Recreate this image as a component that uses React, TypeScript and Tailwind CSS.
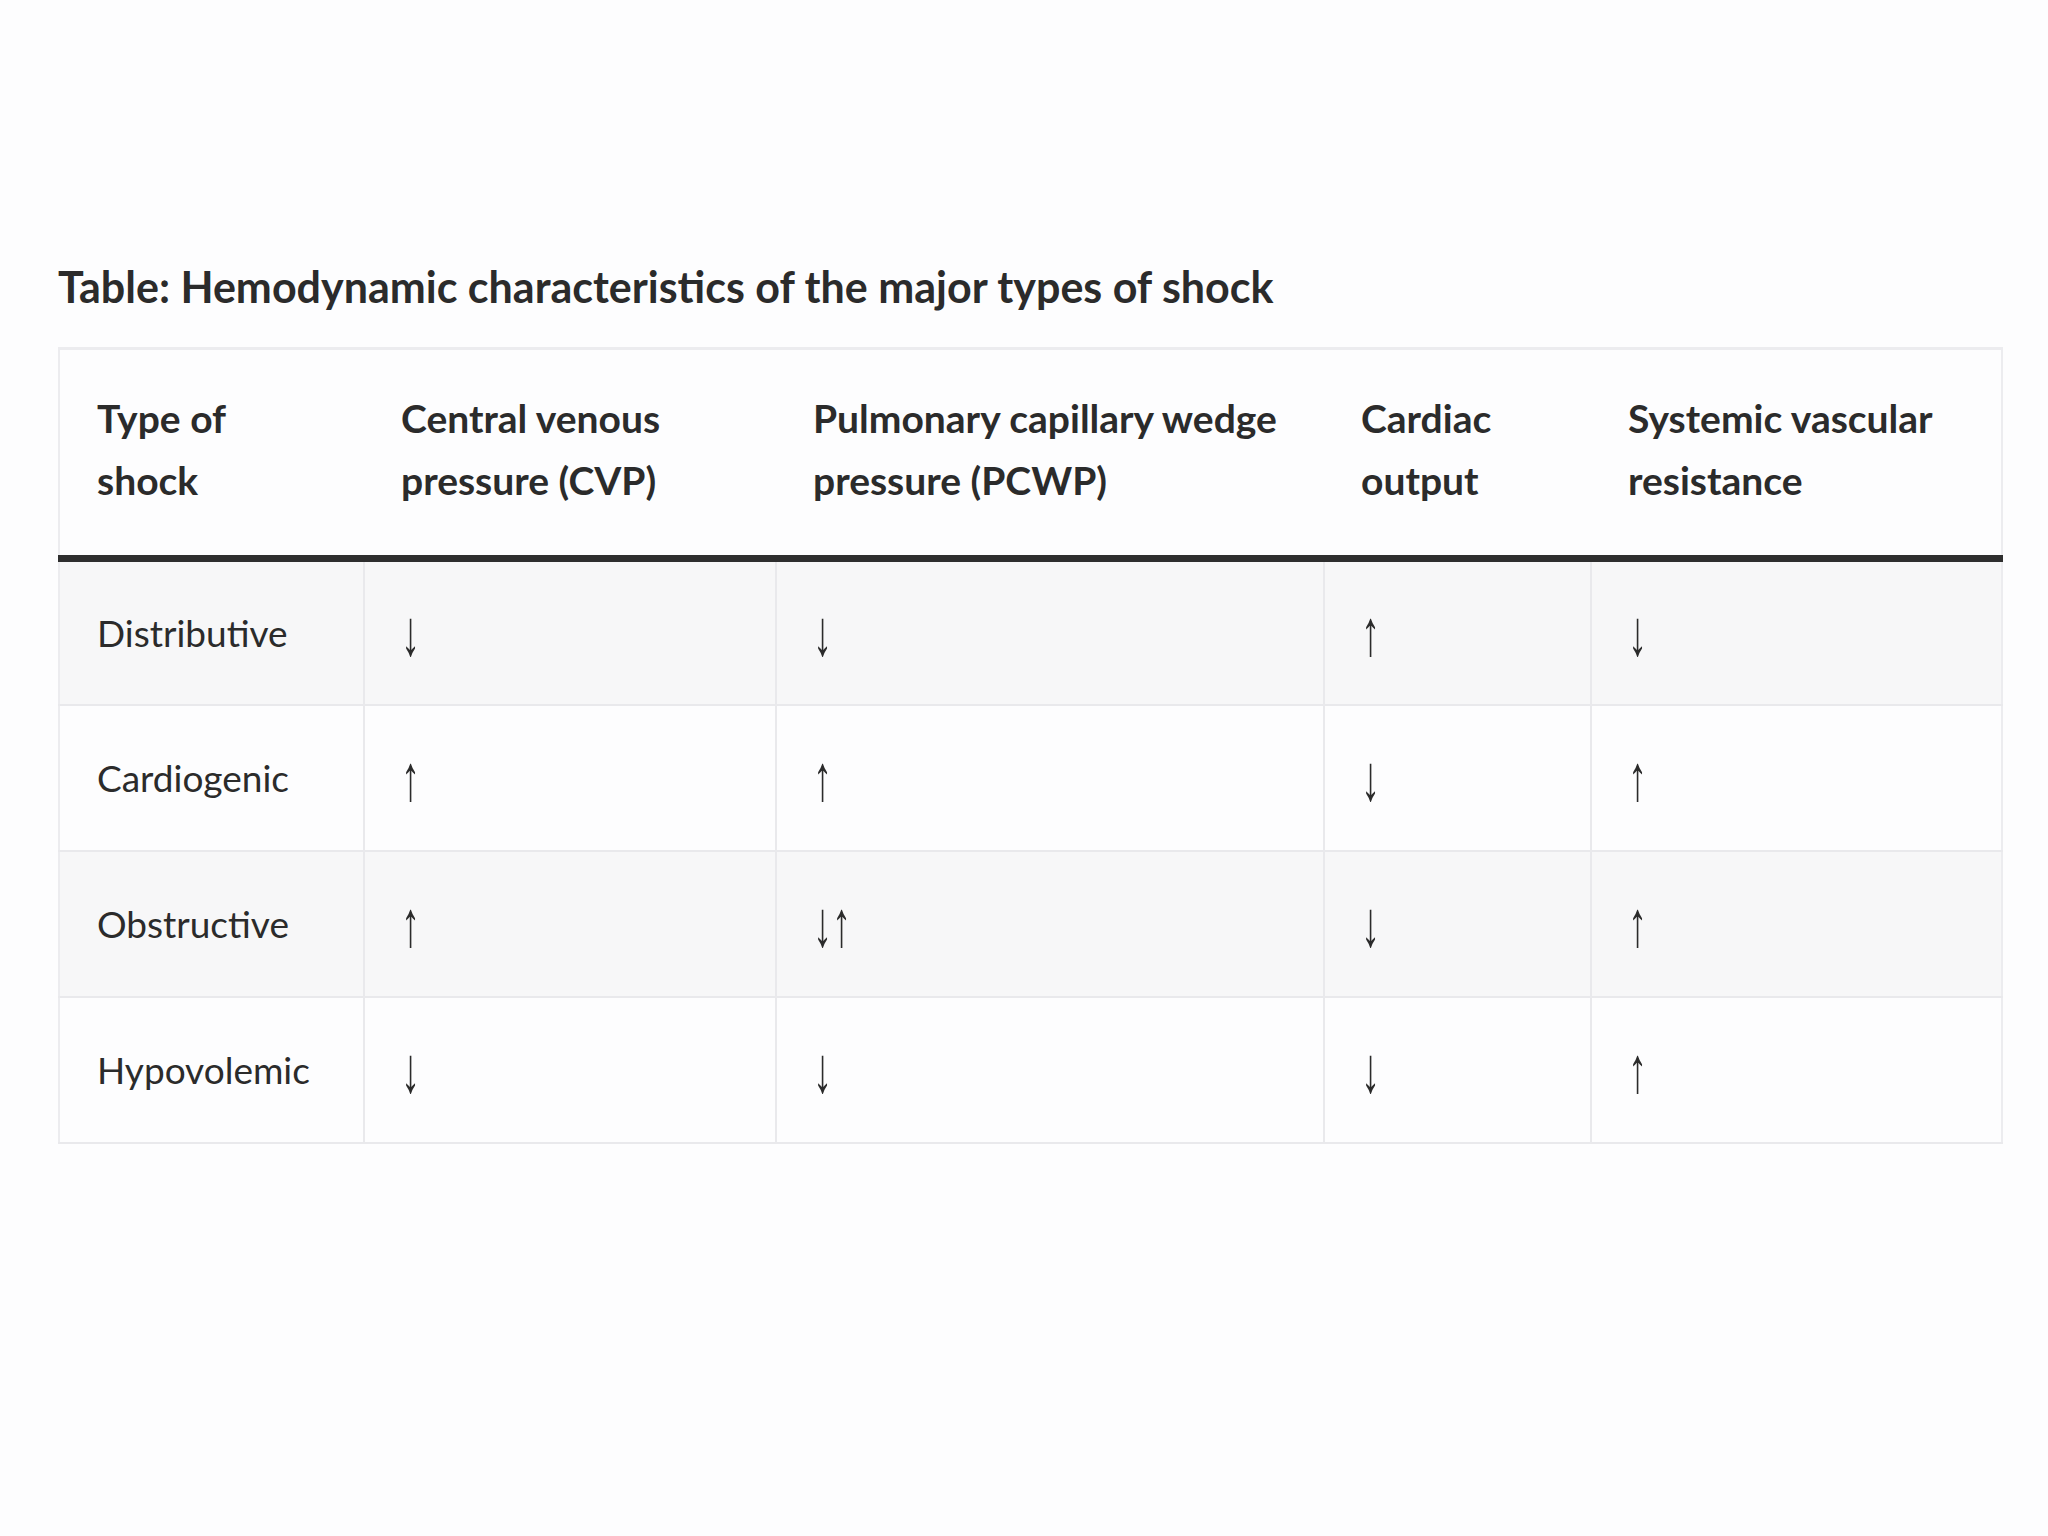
// Hemodynamic characteristics table
const columns = [
  { title: ['Type of', 'shock'], width: 'w-[305px]' },
  { title: ['Central venous', 'pressure (CVP)'], width: 'w-[412px]' },
  { title: ['Pulmonary capillary wedge', 'pressure (PCWP)'], width: 'w-[548px]' },
  { title: ['Cardiac', 'output'], width: 'w-[267px]' },
  { title: ['Systemic vascular', 'resistance'], width: 'w-[411px]' },
];

const rows = [
  { name: 'Distributive', values: ['↓', '↓', '↑', '↓'] },
  { name: 'Cardiogenic', values: ['↑', '↑', '↓', '↑'] },
  { name: 'Obstructive', values: ['↑', '↓↑', '↓', '↑'] },
  { name: 'Hypovolemic', values: ['↓', '↓', '↓', '↑'] },
];

export default function App() {
  return (
    <div className="min-h-screen bg-[#fdfdfe] px-[58px] pt-[265px] text-[#2b2b2b] font-['Lato',_'Liberation_Sans',_sans-serif]">
      <h2 className="text-[43px] font-bold leading-none">
        Table: Hemodynamic characteristics of the major types of shock
      </h2>

      <table className="mt-[39px] w-[1943px] table-fixed border-collapse border-x-2 border-t-[3px] border-[#ececef]">
        <colgroup>
          {columns.map((c, i) => (
            <col key={i} className={c.width} />
          ))}
        </colgroup>
        <thead>
          <tr className="border-b-[7px] border-[#2e2e2e] bg-[#fdfdfe]">
            {columns.map((c, i) => (
              <th
                key={i}
                className="whitespace-nowrap pl-[37px] pr-[10px] pt-[37px] pb-[44px] text-left align-middle text-[39px] font-bold leading-[62px]"
              >
                {c.title[0]}
                <br />
                {c.title[1]}
              </th>
            ))}
          </tr>
        </thead>
        <tbody>
          {rows.map((r, ri) => (
            <tr
              key={r.name}
              className={`border-b-2 border-[#e9e9ec] ${ri % 2 === 0 ? 'bg-[#f7f7f8]' : 'bg-[#fdfdfe]'}`}
            >
              <td className="h-[146px] px-[37px] align-middle text-[37px] leading-none">
                {r.name}
              </td>
              {r.values.map((v, vi) => (
                <td
                  key={vi}
                  className="h-[146px] border-l-2 border-[#e9e9ec] px-[36px] align-middle font-['Liberation_Sans',_sans-serif] text-[38px] leading-none"
                >
                  <span className="inline-block scale-y-[1.7]">{v}</span>
                </td>
              ))}
            </tr>
          ))}
        </tbody>
      </table>
    </div>
  );
}
